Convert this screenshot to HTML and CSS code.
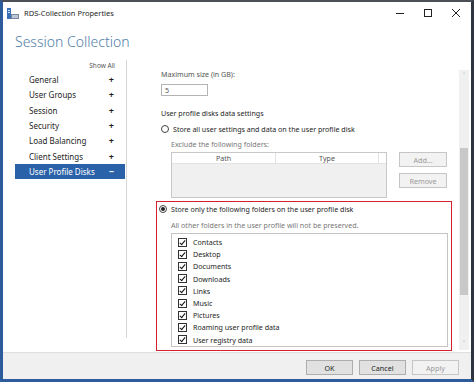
FILE: index.html
```html
<!DOCTYPE html>
<html lang="en">
<head>
    <meta charset="UTF-8">
    <meta name="viewport" content="width=device-width, initial-scale=1.0">
    <title>RDS-Collection Properties</title>
    <link rel="stylesheet" href="styles.css">
</head>
<body>
    <div class="window">
        <header class="titlebar">
            <svg class="app-icon" width="12" height="11" viewBox="0 0 12 11">
                <rect x="0" y="0" width="4" height="11" fill="#3b6fb6"/>
                <rect x="1" y="2" width="2" height="1" fill="#cfe0f5"/>
                <rect x="1" y="4" width="2" height="1" fill="#cfe0f5"/>
                <rect x="4" y="6" width="8" height="5" fill="#7a8a9c"/>
                <rect x="5" y="7" width="6" height="3" fill="#b9c6d4"/>
            </svg>
            <span class="title">RDS-Collection Properties</span>
            <div class="controls">
                <svg width="10" height="10" viewBox="0 0 10 10"><path d="M1 5.5h8" stroke="#222" stroke-width="1"/></svg>
                <svg width="10" height="10" viewBox="0 0 10 10"><rect x="1.5" y="1.5" width="7" height="7" fill="none" stroke="#222" stroke-width="1"/></svg>
                <svg width="10" height="10" viewBox="0 0 10 10"><path d="M1 1l8 8M9 1l-8 8" stroke="#222" stroke-width="1"/></svg>
            </div>
        </header>

        <h1 class="heading">Session Collection</h1>

        <div class="main">
            <nav class="nav">
                <div class="show-all">Show All</div>
                <ul class="nav-list">
                    <li><span>General</span><span class="sign">+</span></li>
                    <li><span>User Groups</span><span class="sign">+</span></li>
                    <li><span>Session</span><span class="sign">+</span></li>
                    <li><span>Security</span><span class="sign">+</span></li>
                    <li><span>Load Balancing</span><span class="sign">+</span></li>
                    <li><span>Client Settings</span><span class="sign">+</span></li>
                    <li class="selected"><span>User Profile Disks</span><span class="sign">&minus;</span></li>
                </ul>
            </nav>

            <section class="content">
                <div class="field">
                    <label class="label">Maximum size (in GB):</label>
                    <div class="textbox">5</div>
                </div>

                <div class="group-title">User profile disks data settings</div>
                <div class="option">
                    <span class="radio"></span>
                    <span>Store all user settings and data on the user profile disk</span>
                </div>
                <div class="hint">Exclude the following folders:</div>
                <div class="exclude">
                    <div class="table">
                        <div class="table-head">
                            <span class="col-path">Path</span>
                            <span class="col-type">Type</span>
                            <span class="col-end"></span>
                        </div>
                    </div>
                    <div class="side-buttons">
                        <button class="btn disabled">Add...</button>
                        <button class="btn disabled">Remove</button>
                    </div>
                </div>

                <div class="highlight">
                    <div class="option">
                        <span class="radio checked"></span>
                        <span>Store only the following folders on the user profile disk</span>
                    </div>
                    <div class="hint">All other folders in the user profile will not be preserved.</div>
                    <ul class="folders">
                        <li><span class="check"></span>Contacts</li>
                        <li><span class="check"></span>Desktop</li>
                        <li><span class="check"></span>Documents</li>
                        <li><span class="check"></span>Downloads</li>
                        <li><span class="check"></span>Links</li>
                        <li><span class="check"></span>Music</li>
                        <li><span class="check"></span>Pictures</li>
                        <li><span class="check"></span>Roaming user profile data</li>
                        <li><span class="check"></span>User registry data</li>
                    </ul>
                </div>
            </section>

            <div class="scrollbar">
                <span class="arrow">&#708;</span>
                <div class="track"><div class="thumb"></div></div>
                <span class="arrow">&#709;</span>
            </div>
        </div>

        <footer class="footer">
            <button class="btn">OK</button>
            <button class="btn">Cancel</button>
            <button class="btn disabled">Apply</button>
        </footer>
    </div>
</body>
</html>
```

FILE: styles.css
```css
* {
    margin: 0;
    padding: 0;
    box-sizing: border-box;
}

body {
    font-family: 'Noto Sans', 'Open Sans', sans-serif;
    background: #ffffff;
    color: #1e1e1e;
}

.window {
    width: 474px;
    height: 382px;
    display: flex;
    flex-direction: column;
    background: #ffffff;
    border-left: 3px solid #2d5c9c;
    border-right: 3px solid #2f3442;
    border-top: 2px solid #4c4f55;
    border-bottom: 3px solid #2d5c9c;
}

/* title bar */
.titlebar {
    height: 22px;
    display: flex;
    align-items: center;
    padding-left: 4px;
    font-size: 7.5px;
}

.app-icon {
    margin-right: 5px;
}

.controls {
    margin-left: auto;
    display: flex;
    gap: 18px;
    padding-right: 10px;
}

/* heading */
.heading {
    height: 34px;
    padding: 8px 0 0 12px;
    font-size: 14px;
    font-weight: 300;
    color: #4f80a8;
    line-height: 20px;
}

/* main area */
.main {
    height: 294px;
    display: flex;
}

.nav {
    width: 124px;
    margin-top: 2px;
    height: 278px;
    padding: 0 1px 0 12px;
    border-right: 1px solid #d6d6d6;
}

.show-all {
    height: 12px;
    line-height: 12px;
    font-size: 6.5px;
    color: #555;
    text-align: right;
    padding-right: 10px;
}

.nav-list {
    list-style: none;
}

.nav-list li {
    height: 15.3px;
    display: flex;
    align-items: center;
    justify-content: space-between;
    padding: 0 11px 0 14px;
    font-size: 8px;
}

.nav-list .sign {
    font-weight: bold;
    font-size: 9px;
}

.nav-list .selected {
    background: #2a62a9;
    color: #ffffff;
}

/* content */
.content {
    width: 332px;
    padding: 10px 8px 0 29px;
    font-size: 7.1px;
}

.field,
.group-title,
.option,
.hint,
.exclude {
    padding-left: 5px;
}

.label {
    display: block;
    height: 12px;
    line-height: 12px;
    color: #555;
}

.textbox {
    margin-top: 4px;
    width: 47px;
    height: 12px;
    line-height: 10px;
    border: 1px solid #b4b4b4;
    padding-left: 3px;
    color: #555;
}

.group-title {
    margin-top: 11px;
    height: 12px;
    line-height: 12px;
}

.option {
    margin-top: 4px;
    height: 12px;
    display: flex;
    align-items: center;
    gap: 4px;
}

.radio {
    width: 8px;
    height: 8px;
    border: 1px solid #444;
    border-radius: 50%;
    display: flex;
    align-items: center;
    justify-content: center;
}

.radio.checked::after {
    content: "";
    width: 4px;
    height: 4px;
    border-radius: 50%;
    background: #222;
}

.hint {
    margin-top: 3px;
    height: 12px;
    line-height: 12px;
    padding-left: 15px;
    color: #777;
}

.exclude {
    margin-top: 2px;
    padding-left: 15px;
    display: flex;
    gap: 12px;
}

.table {
    width: 216px;
    height: 46px;
    border: 1px solid #c8c8c8;
    background: #f0f0f0;
}

.table-head {
    height: 11px;
    display: flex;
    background: #ffffff;
    border-bottom: 1px solid #e2e2e2;
    color: #555;
    line-height: 10px;
}

.table-head span {
    text-align: center;
    border-right: 1px solid #e2e2e2;
}

.col-path {
    width: 104px;
}

.col-type {
    width: 103px;
}

.col-end {
    flex: 1;
    border-right: none !important;
}

.side-buttons {
    display: flex;
    flex-direction: column;
    gap: 6px;
}

.btn {
    width: 48px;
    height: 15px;
    font-family: inherit;
    font-size: 7.2px;
    border: 1px solid #adadad;
    background: #e1e1e1;
    color: #1e1e1e;
}

.btn.disabled {
    background: #f2f2f2;
    border-color: #c6c6c6;
    color: #9a9a9a;
}

/* red highlighted option */
.highlight {
    margin-top: 3px;
    width: 296px;
    height: 150px;
    border: 1.5px solid #d42030;
    padding-top: 1px;
}

.highlight .option {
    margin-top: 0;
    padding-left: 2px;
}

.highlight .hint {
    margin-top: 4px;
    padding-left: 14px;
}

.folders {
    list-style: none;
    margin: 2px 3px 0 14px;
    height: 114px;
    border: 1px solid #c4c4c4;
    padding: 2px 0 0 6px;
}

.folders li {
    height: 12.2px;
    display: flex;
    align-items: center;
    gap: 6px;
}

.check {
    width: 9px;
    height: 9px;
    border: 1px solid #333;
    position: relative;
}

.check::after {
    content: "";
    position: absolute;
    left: 2px;
    top: 0;
    width: 2px;
    height: 5px;
    border-right: 1.5px solid #111;
    border-bottom: 1.5px solid #111;
    transform: rotate(40deg);
}

/* scrollbar */
.scrollbar {
    width: 10px;
    margin: 12px 2px 2px 0;
    background: #f0f0f0;
    display: flex;
    flex-direction: column;
    align-items: center;
}

.arrow {
    height: 12px;
    font-size: 7px;
    line-height: 12px;
    color: #8a8a8a;
}

.track {
    flex: 1;
    width: 100%;
    padding-top: 66px;
}

.thumb {
    height: 147px;
    margin: 0 1px;
    background: #c8c8c8;
}

/* footer */
.footer {
    height: 27px;
    display: flex;
    justify-content: flex-end;
    gap: 6px;
    padding: 7px 12px 0 0;
    background: #f0f0f0;
    border-top: 1px solid #dfdfdf;
}

.footer .btn {
    width: 47px;
}
```
